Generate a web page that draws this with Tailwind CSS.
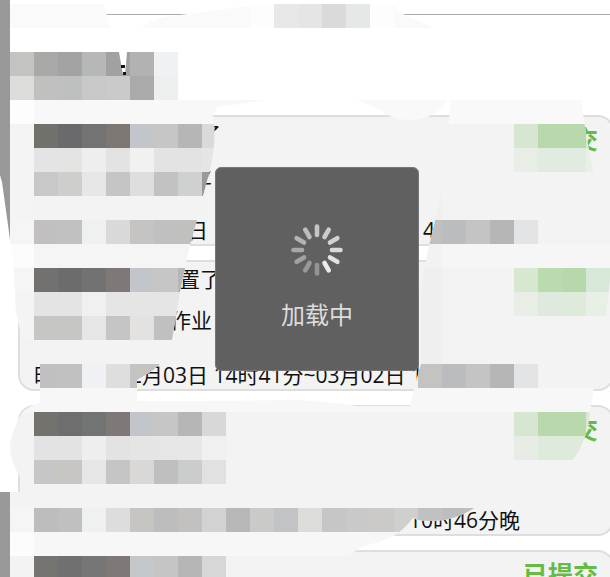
<!DOCTYPE html>
<html lang="zh-CN">
<head>
    <meta charset="UTF-8">
    <meta name="viewport" content="width=device-width, initial-scale=1.0">
    <title>作业列表</title>
    <script src="https://cdn.jsdelivr.net/npm/@tailwindcss/browser@4"></script>
</head>
<body class="bg-white text-[#111] font-['Open_Sans','Noto_Sans_CJK_SC',sans-serif] overflow-hidden">
    <div id="app" class="relative h-screen overflow-hidden">
        <!-- Header -->
        <header class="ml-[10px] pt-[14px] h-[115px]">
            <div class="border-t border-[#aaa]"></div>
        </header>

        <!-- Homework list -->
        <main class="pl-[18px]">
            <ul class="flex flex-col gap-[14px] -mr-1">
                <li class="flex flex-col h-[131px] rounded-2xl border-2 border-[#dedede] bg-[#f3f3f3] pl-[14px] pr-[14px] text-[21px] leading-6">
                    <div class="flex justify-between pt-[5px]">
                        <h2 class="pl-[145px]">置了</h2>
                        <span class="text-[25px] leading-[34px] font-bold text-[#65bb44]">已提交</span>
                    </div>
                    <p class="pl-[136px] pt-[7px]">作业</p>
                    <p class="pt-[31px] whitespace-nowrap">时间段：12月03日 14时41分~03月02日 14</p>
                </li>
                <li class="flex flex-col h-[131px] rounded-2xl border-2 border-[#dedede] bg-[#f3f3f3] pl-[14px] pr-[14px] text-[21px] leading-6">
                    <div class="flex justify-between pt-[5px]">
                        <h2 class="pl-[145px]">置了</h2>
                        <span class="text-[25px] leading-[34px] font-bold text-[#65bb44]">已提交</span>
                    </div>
                    <p class="pl-[136px] pt-[7px]">作业</p>
                    <p class="pt-[31px] whitespace-nowrap">时间段：12月03日 14时41分~03月02日 14</p>
                </li>
                <li class="flex flex-col h-[131px] rounded-2xl border-2 border-[#dedede] bg-[#f3f3f3] pl-[14px] pr-[14px] text-[21px] leading-6">
                    <div class="flex justify-between pt-[5px]">
                        <h2 class="pl-[145px]">置了</h2>
                        <span class="text-[25px] leading-[34px] font-bold text-[#65bb44]">已提交</span>
                    </div>
                    <p class="pl-[136px] pt-[7px]">作业</p>
                    <p class="pl-[375px] pt-[31px] whitespace-nowrap">10时46分晚</p>
                </li>
                <li class="flex flex-col h-[131px] rounded-2xl border-2 border-[#dedede] bg-[#f3f3f3] pl-[14px] pr-[14px] text-[21px] leading-6">
                    <div class="flex justify-end pt-[5px]">
                        <span class="text-[25px] leading-[34px] font-bold text-[#65bb44]">已提交</span>
                    </div>
                </li>
            </ul>
        </main>

        <!-- Privacy mosaic -->
        <svg class="absolute left-0 top-0 pointer-events-none" width="610" height="577" viewBox="0 0 610 577" aria-hidden="true">
            <defs>
                <clipPath id="clip-top"><path d="M10 4H104L110 28H10ZM140 28L150 22L165 17L195 13L240 7L262 4H392L403 14L435 28Z"/></clipPath>
                <clipPath id="clip-head"><path d="M10 52H119L123 75H125L127 52H178V100H10Z"/></clipPath>
                <clipPath id="clip-left"><path d="M10 100H267L217 107L213 116Q217 140 210 170Q206 184 203 196L197 220L190 245L180 292L172 340L160 364L152 371L137 380V401H200L300 400L345 404L356 406H412V508H474Q455 521 430 521Q418 521 413 518Q403 531 390 538L360 548L348 556H226V580H10V492H20V477Q10 460 10 447Q10 437 18 420Q22 409 34 405L40 403V364L32 355Q21 340 19 325Q15 315 15 290L13 257L10 240Z"/></clipPath>
                <clipPath id="clip-right"><path d="M451 100H581L587 140L593 172L598 196L610 220V280L606 315L597 364L592 400L588 425Q584 445 573 460H410V406L414 388L421 364V300Q421 285 428 250L434 225L442 190Z"/></clipPath>
            </defs>
            <path fill="#999" d="M0 0H10V240L8 225L2 182L0 175ZM0 492H10V577H0Z"/>
            <path fill="#f9f9f9" d="M356 100H448Q435 120 409 120Q392 120 378 109Z"/>
            <g id="mosaic-top" clip-path="url(#clip-top)"></g>
            <g id="mosaic-head" clip-path="url(#clip-head)"></g>
            <path fill="#111" d="M121 65H125V68H121ZM123 72H126V75H123Z"/>
            <g id="mosaic-left" clip-path="url(#clip-left)"></g>
            <g id="mosaic-right" clip-path="url(#clip-right)"></g>
        </svg>

        <!-- Loading toast -->
        <div role="status" class="absolute left-[215px] top-[167px] size-[204px] rounded-md border border-[#777] bg-[#606060] flex flex-col items-center pt-[55px] gap-5">
            <svg width="54" height="54" viewBox="-27 -27 54 54" stroke-width="4.6" stroke-linecap="round" aria-hidden="true">
                <path stroke="#c4c4c4" d="M0-15V-23.5"/>
                <path stroke="#cbcbcb" d="M0-15V-23.5" transform="rotate(30)"/>
                <path stroke="#d2d2d2" d="M0-15V-23.5" transform="rotate(60)"/>
                <path stroke="#d9d9d9" d="M0-15V-23.5" transform="rotate(90)"/>
                <path stroke="#e2e2e2" d="M0-15V-23.5" transform="rotate(120)"/>
                <path stroke="#ececec" d="M0-15V-23.5" transform="rotate(150)"/>
                <path stroke="#949494" d="M0-15V-23.5" transform="rotate(180)"/>
                <path stroke="#999" d="M0-15V-23.5" transform="rotate(210)"/>
                <path stroke="#a1a1a1" d="M0-15V-23.5" transform="rotate(240)"/>
                <path stroke="#a9a9a9" d="M0-15V-23.5" transform="rotate(270)"/>
                <path stroke="#b3b3b3" d="M0-15V-23.5" transform="rotate(300)"/>
                <path stroke="#bcbcbc" d="M0-15V-23.5" transform="rotate(330)"/>
            </svg>
            <p class="text-2xl leading-9 text-[#dcdcdc]">加载中</p>
        </div>
    </div>

    <script>
        const CELL = 24;

        // [y, first x, base colour, cell colours]
        const mosaics = {
            'mosaic-top': [
                [4, 250, '#fafafa', 'fdfdfd e8e8e8 e5e5e5 dadada e6e8e7 fdfdfd'],
            ],
            'mosaic-head': [
                [52, 10, '#fff', 'c3c3c1 a9a9a7 a3a3a3 b5b8b7 a1a1a3 b2b2b2 f0f1f4'],
                [76, 10, '#fff', 'dcdcda c0c0be bdc0bf c8c8c8 cacaca aaaaaa eef0ef'],
            ],
            'mosaic-left': [
                [100, 10, '#f8f8f8', 'fdfdfd'],
                [124, 34, '#f4f4f4', '71716b 6a6a6c 737373 7d7774 c2c6ca c6c6c6 b6b6b6 dadada'],
                [148, 34, '#f4f4f4', 'e4e4e4 e4e4e2 eeeeee e3e3e3 f1f1f1 e3e3e3 e3e3e3 e5e5e5'],
                [172, 34, '#f4f4f4', 'c8c8c8 cececc e7e7e7 c5c5c5 dedede c2c2c2 cfd1d0 999999'],
                [196, 10, '#f3f3f3', 'f4f4f4'],
                [220, 34, '#f5f5f5', 'c1bfc0 c1c1c1 eef1f0 d9d9d9 c5c4c2 c0c0c0 c0c0be c0c0be'],
                [244, 10, '#f5f5f5', 'fcfcfc'],
                [268, 34, '#f5f5f5', '72716f 6c6c6c 727272 7e7876 c2c6ca c6c6c6 b6b6b6'],
                [292, 34, '#f4f4f4', 'e4e4e4 e4e4e4 eef1f0 e5e5e5 e5e5e5 e5e5e5 e5e5e5'],
                [316, 34, '#f4f4f4', 'c6c6c4 c6c6c4 e6e6e6 c5c5c5 e3e2e0 c0c0c0 c0c0c0'],
                [340, 34, '#f3f3f3', ''],
                [364, 34, '#f3f3f3', 'c1bfc0 c1c1c1 eff1f4 dedede c4c3c1 c4c3c1'],
                [388, 34, '#f7f7f7', ''],
                [412, 34, '#f3f3f3', '73726d 6e6e6e 717473 7e7977 c2c6ca c6c6c6 b6b6b6 d8d8d8'],
                [436, 34, '#f3f3f3', 'e3e3e3 e3e3e3 eeeeee e3e3e3 e5e5e5 e6e6e6 e7e7e7 f0f0f0'],
                [460, 34, '#f3f3f3', 'c6c6c6 c8c6c3 e6e6e6 c5c5c5 d9d8d6 bfbfbf cbcdcc e1e1e1'],
                [484, 34, '#f3f3f3', ''],
                [508, 34, '#f5f5f5', 'bdbdbd c0c0c0 eff1f0 dddddd c6c5c2 bdbdbd c2c1bf d2d2d2 b8b8b8 cacac8 c2c3c5 dcdcda c6c6c6 c9c9c9 cccac9 cfcfcd c0c2c2 bcbdbf bcbdbf'],
                [532, 10, '#f7f7f7', 'fcfcfc'],
                [556, 34, '#f3f3f3', '757470 707070 767676 7e7876 c4c8cb c5c5c5 b6b6b6 d7d7d7'],
            ],
            'mosaic-right': [
                [100, 418, '#f9f9f9', ''],
                [124, 514, '#f3f3f3', 'd6e6d1 b8d9ab b8d9ab d9e8d8'],
                [148, 514, '#f3f3f3', 'e8eee6 e1ebdf e1ebdf e8eee8'],
                [172, 418, '#f3f3f3', 'efefef'],
                [196, 418, '#f3f3f3', 'efefef'],
                [220, 418, '#f3f3f3', 'c0c0be babcbe c4c4c4 b6b6b6 e2e4e6'],
                [244, 418, '#f6f6f6', 'f2f2f2'],
                [268, 418, '#f3f3f3', 'efefef f3f3f3 f3f3f3 f3f3f3 d7e8d0 b9dbad b7d8aa d8e8d8'],
                [292, 418, '#f3f3f3', 'efefef f3f3f3 f3f3f3 f3f3f3 e8eee6 dfe9dd dfebda e8efe6'],
                [316, 418, '#f3f3f3', 'efefef'],
                [340, 418, '#f3f3f3', 'efefef'],
                [364, 418, '#f3f3f3', 'c3c3c1 babcbe c4c4c4 b6b6b6 e2e4e6'],
                [388, 418, '#f7f7f7', ''],
                [412, 514, '#f3f3f3', 'd6e6d1 b9d9ac b9d9ac d9e8d8'],
                [436, 514, '#f3f3f3', 'e7ece5 dfebda dfebda e7ece5'],
            ],
        };

        function addRect(group, x, y, width, height, fill) {
            const rect = document.createElementNS('http://www.w3.org/2000/svg', 'rect');
            Object.entries({ x, y, width, height, fill }).forEach(([k, v]) => rect.setAttribute(k, v));
            group.appendChild(rect);
        }

        Object.entries(mosaics).forEach(([id, rows]) => {
            const group = document.getElementById(id);
            rows.forEach(([y, startX, base, cells]) => {
                addRect(group, 0, y, 610, CELL, base);
                cells.split(' ').filter(Boolean).forEach((color, i) => {
                    addRect(group, startX + i * CELL, y, CELL, CELL, '#' + color);
                });
            });
        });
    </script>
</body>
</html>
